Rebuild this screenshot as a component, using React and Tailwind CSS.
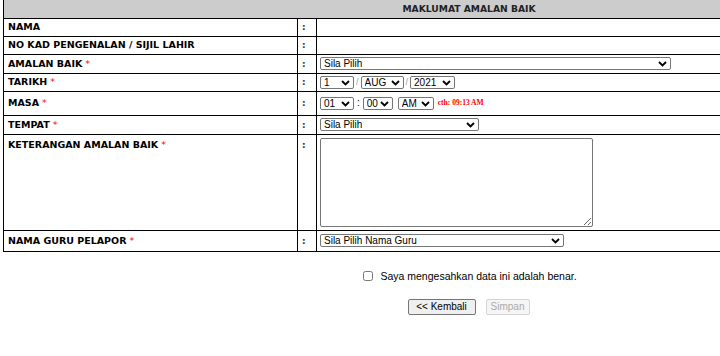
import React from 'react';

const labelFont = { fontFamily: '"DejaVu Sans", Verdana, sans-serif' };

const Select = ({ width, value }) => (
  <span
    className="relative block h-[13px] border border-[#767676] rounded-[2px] bg-white"
    style={{ width }}
  >
    <select
      defaultValue={value}
      className="appearance-none block w-full h-full bg-transparent pl-[3px] pr-[14px] text-[10px] leading-[11px] text-black outline-none font-['Liberation_Sans',Arial,sans-serif]"
    >
      <option>{value}</option>
    </select>
    <svg
      className="absolute right-[3px] top-[3px] pointer-events-none"
      width="9"
      height="6"
      viewBox="0 0 9 6"
    >
      <path d="M1 1l3.5 3.5L8 1" fill="none" stroke="#000" strokeWidth="1.8" />
    </svg>
  </span>
);

const Req = () => <span className="text-[#ff0000] font-normal"> *</span>;

const Row = ({ label, required, height, top, children }) => (
  <tr style={{ height }}>
    <td
      className={`border border-black pl-[4px] text-[9.5px] leading-[12px] font-bold text-black ${top ? 'align-top pt-[4px]' : 'align-middle'}`}
      style={labelFont}
    >
      {label}
      {required && <Req />}
    </td>
    <td
      className={`border border-black pl-[4px] text-[9px] leading-[12px] font-bold text-[#333] ${top ? 'align-top pt-[4px]' : 'align-middle'}`}
      style={labelFont}
    >
      :
    </td>
    <td className={`border border-black pl-[3px] text-[10px] leading-none ${top ? 'align-top pt-[3px]' : 'align-middle'}`}>
      <div className="flex items-center">{children}</div>
    </td>
  </tr>
);

const Sep = ({ children }) => (
  <span className="px-[2px] text-[9px] leading-none text-[#999] font-['Liberation_Sans',Arial,sans-serif]">
    {children}
  </span>
);

export default function App() {
  return (
    <div className="w-[720px] h-[356px] overflow-hidden bg-white">
      <div className="w-[935px]">
        <table className="ml-[3px] w-[932px] border-collapse table-fixed">
          <colgroup>
            <col className="w-[294px]" />
            <col className="w-[19px]" />
            <col />
          </colgroup>
          <tbody>
            <tr className="h-[18px]">
              <td
                colSpan={3}
                className="border border-black border-t-0 bg-[#cccccc] text-center text-[9.2px] leading-[12px] font-bold text-[#222]"
                style={labelFont}
              >
                MAKLUMAT AMALAN BAIK
              </td>
            </tr>
            <Row label="NAMA" height={18} />
            <Row label="NO KAD PENGENALAN / SIJIL LAHIR" height={18} />
            <Row label="AMALAN BAIK" required height={19}>
              <Select width={351} value="Sila Pilih" />
            </Row>
            <Row label="TARIKH" required height={18}>
              <Select width={34} value="1" />
              <Sep>/</Sep>
              <Select width={43} value="AUG" />
              <Sep>/</Sep>
              <Select width={45} value="2021" />
            </Row>
            <Row label="MASA" required height={24}>
              <Select width={34} value="01" />
              <span className="px-[3px] text-[10px] leading-none text-black font-['Liberation_Sans',Arial,sans-serif]">:</span>
              <Select width={30} value="00" />
              <span className="w-[5px]" />
              <Select width={36} value="AM" />
              <span className="ml-[4px] text-[7.5px] leading-none font-bold text-[#ff0000] font-['Liberation_Serif','Times_New_Roman',serif]">
                cth: 09:13 AM
              </span>
            </Row>
            <Row label="TEMPAT" required height={19}>
              <Select width={159} value="Sila Pilih" />
            </Row>
            <Row label="KETERANGAN AMALAN BAIK" required height={96} top>
              <textarea className="block w-[273px] h-[89px] border border-[#767676] rounded-[2px] resize" />
            </Row>
            <Row label="NAMA GURU PELAPOR" required height={21}>
              <Select width={244} value="Sila Pilih Nama Guru" />
            </Row>
          </tbody>
        </table>

        <div className="flex flex-col items-center pl-[2px] pt-[17px] font-['Liberation_Sans',Arial,sans-serif]">
          <label className="ml-[3px] flex items-center gap-[7px] text-[10.5px] text-black">
            <input type="checkbox" className="w-[10px] h-[10px] m-0" />
            Saya mengesahkan data ini adalah benar.
          </label>
          <div className="flex gap-[10px] mt-[15px]">
            <button className="w-[68px] h-[16px] border border-[#767676] rounded-[2px] bg-[#efefef] text-[10px] leading-none text-black">
              &lt;&lt; Kembali
            </button>
            <button
              disabled
              className="w-[44px] h-[16px] border border-[#d4d4d4] rounded-[2px] bg-[#f5f5f5] text-[10px] leading-none text-[#aaaaaa]"
            >
              Simpan
            </button>
          </div>
        </div>
      </div>
    </div>
  );
}
